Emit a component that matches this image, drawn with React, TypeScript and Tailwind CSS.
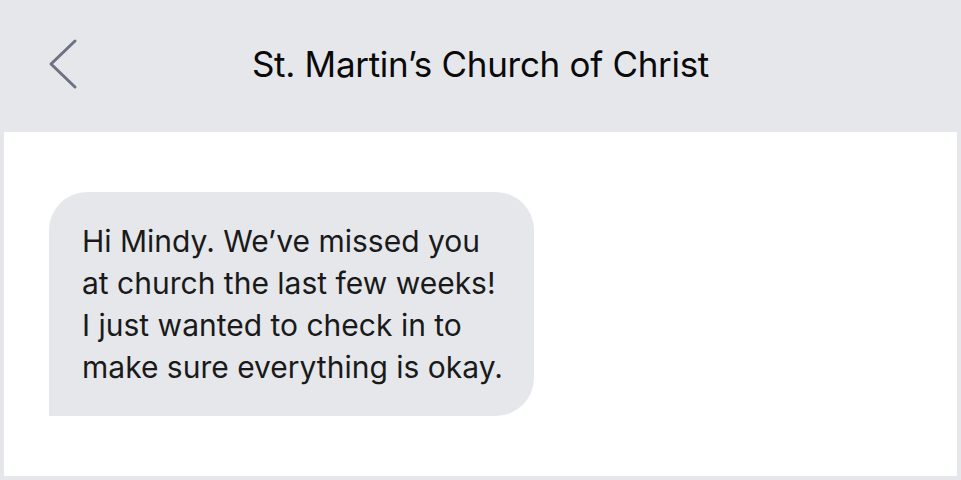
import React from "react";

export default function App() {
  return (
    <div
      className="w-[961px] h-[480px] bg-[#e5e7eb] flex flex-col"
      style={{ fontFamily: "Inter, 'Noto Sans', sans-serif" }}
    >
      <div className="h-[132px] pb-[4px] flex items-center justify-center relative shrink-0">
        <svg
          className="absolute left-[48px] top-[38px]"
          width="30"
          height="52"
          viewBox="0 0 30 52"
          fill="none"
        >
          <path
            d="M27 3 L3 26 L27 49"
            stroke="#6b7280"
            strokeWidth="3"
            strokeLinecap="round"
            strokeLinejoin="round"
          />
        </svg>
        <div className="text-[35px] text-[#0a0a0a] tracking-[-0.3px]">
          St. Martin’s Church of Christ
        </div>
      </div>
      <div className="flex-1 mx-1 mb-1 bg-white pt-[60px] pl-[45px]">
        <div className="w-[485px] h-[224px] bg-[#e5e7eb] rounded-[38px] rounded-bl-none pl-[33px] pt-[28px] text-[30px] leading-[42px] text-[#1a1a1a]">
          Hi Mindy. We’ve missed you
          <br />
          at church the last few weeks!
          <br />
          I just wanted to check in to
          <br />
          make sure everything is okay.
        </div>
      </div>
    </div>
  );
}
